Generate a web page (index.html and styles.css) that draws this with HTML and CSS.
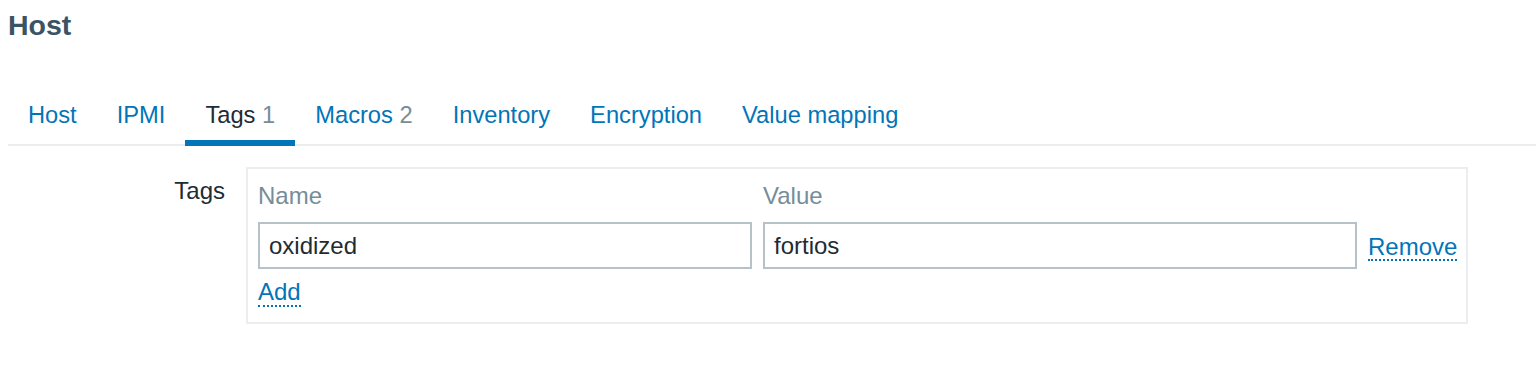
FILE: index.html
```html
<!DOCTYPE html>
<html lang="en">
<head>
<meta charset="utf-8">
<title>Host</title>
<link rel="stylesheet" href="styles.css">
</head>
<body>
<header class="page-header">
  <h1 class="page-title">Host</h1>
</header>
<nav class="tabs">
  <a class="tab" href="#">Host</a>
  <a class="tab" href="#">IPMI</a>
  <a class="tab tab-active" href="#">Tags <span class="tab-count">1</span></a>
  <a class="tab" href="#">Macros <span class="tab-count">2</span></a>
  <a class="tab" href="#">Inventory</a>
  <a class="tab" href="#">Encryption</a>
  <a class="tab" href="#">Value mapping</a>
</nav>
<main class="form">
  <div class="form-label">Tags</div>
  <div class="tags-box">
    <div class="tags-grid">
      <div class="col-head">Name</div>
      <div class="col-head">Value</div>
      <div></div>
      <div class="input">oxidized</div>
      <div class="input">fortios</div>
      <a class="link link-remove" href="#">Remove</a>
    </div>
    <div class="add-row"><a class="link" href="#">Add</a></div>
  </div>
</main>
</body>
</html>
```

FILE: styles.css
```css
html, body {
  margin: 0;
  padding: 0;
  background: #ffffff;
}
body {
  font-family: "Liberation Sans", Arial, sans-serif;
  font-size: 24px;
  line-height: 27px;
  color: #1f2c33;
}
.page-header {
  padding: 8px 8px 0 8px;
}
.page-title {
  margin: 0;
  font-size: 28.5px;
  line-height: 34px;
  font-weight: bold;
  color: #3b5363;
}
.tabs {
  display: flex;
  margin: 49px 0 0 8px;
  border-bottom: 2px solid #ebeef0;
  font-size: 23.7px;
}
.tab {
  display: block;
  padding: 11px 20px;
  margin-bottom: -2px;
  border-bottom: 6px solid transparent;
  color: #0275b8;
  text-decoration: none;
  white-space: nowrap;
}
.tab-active {
  color: #1f2c33;
  border-bottom-color: #0275b8;
}
.tab-count {
  color: #768d99;
}
.form {
  display: grid;
  grid-template-columns: 225px auto;
  column-gap: 21px;
  align-items: start;
  justify-content: start;
  margin-top: 21px;
}
.form-label {
  text-align: right;
  margin-top: 10px;
}
.tags-box {
  border: 2px solid #ebeef0;
  padding: 13px 9px 17px 10px;
}
.tags-grid {
  display: grid;
  grid-template-columns: 494px 594px auto;
  column-gap: 11px;
  align-items: center;
}
.col-head {
  color: #768d99;
  margin-bottom: 13px;
}
.input {
  box-sizing: border-box;
  height: 47px;
  border: 2px solid #b5c2c9;
  padding: 8px 9px;
  color: #1f2c33;
}
.link {
  color: #0275b8;
  text-decoration: none;
  border-bottom: 2px dotted #0275b8;
}
.link-remove {
  justify-self: start;
  line-height: 25px;
  margin-top: 3px;
}
.add-row {
  margin-top: 9px;
  line-height: 27px;
}
```
